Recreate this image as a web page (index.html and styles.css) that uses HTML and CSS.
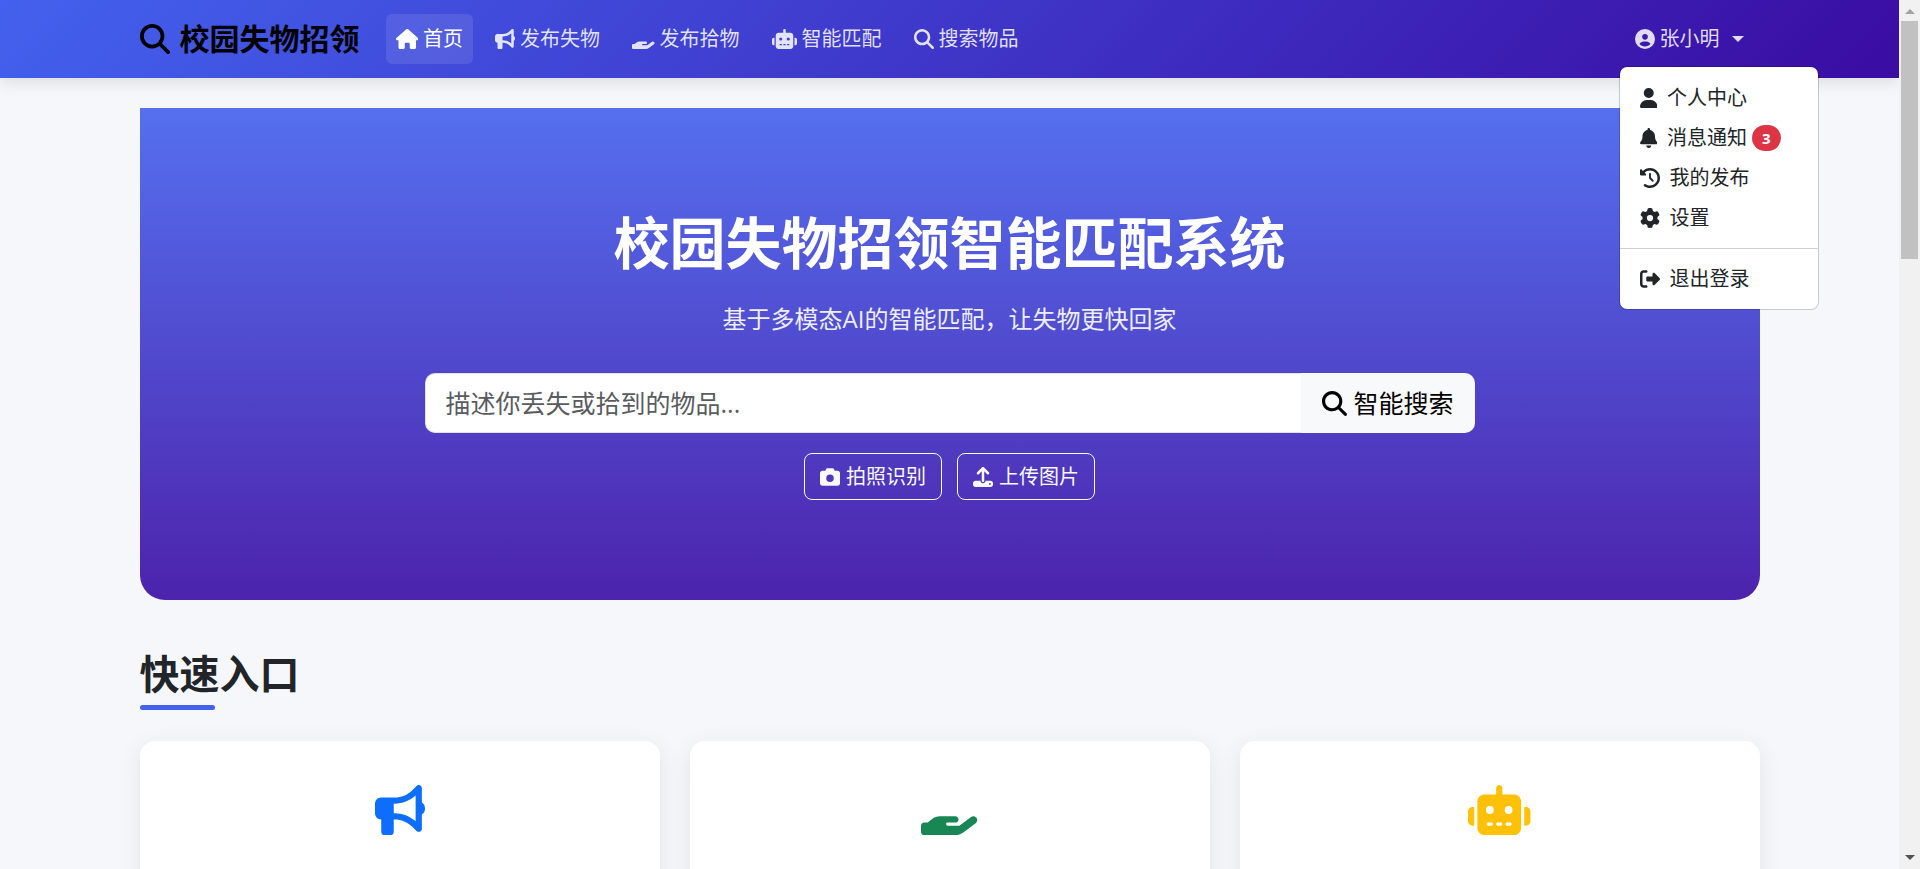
FILE: index.html
```html
<!DOCTYPE html>
<html lang="zh-CN">

<head>
    <meta charset="UTF-8">
    <meta name="viewport" content="width=device-width, initial-scale=1.0">
    <title>校园失物招领智能匹配系统</title>
    <link rel="stylesheet" href="styles.css">
</head>

<body>

    <!-- 共用图标 -->
    <svg class="icon-defs" aria-hidden="true">
        <defs>
            <path id="i-search" d="M416 208c0 45.9-14.9 88.3-40 122.7L502.6 457.4c12.5 12.5 12.5 32.8 0 45.3s-32.8 12.5-45.3 0L330.7 376c-34.4 25.2-76.8 40-122.7 40C93.1 416 0 322.9 0 208S93.1 0 208 0S416 93.1 416 208zM208 352a144 144 0 1 0 0-288 144 144 0 1 0 0 288z"/>
            <path id="i-bullhorn" d="M480 32c0-12.9-7.8-24.6-19.8-29.6s-25.7-2.2-34.9 6.9L381.7 53c-48 48-113.1 75-181 75H192 160 64c-35.3 0-64 28.7-64 64v96c0 35.3 28.7 64 64 64l0 128c0 17.7 14.3 32 32 32h64c17.7 0 32-14.3 32-32V352l8.7 0c67.9 0 133 27 181 75l43.6 43.6c9.2 9.2 22.9 11.9 34.9 6.9s19.8-16.6 19.8-29.6V300.4c18.6-8.8 32-32.5 32-60.4s-13.4-51.6-32-60.4V32zm-64 76.7V240 371.3C357.2 317.8 280.5 288 200.7 288H192V192h8.7c79.8 0 156.5-29.8 215.3-83.3z"/>
            <path id="i-hand" d="M559.7 392.2c17.8-13.1 21.6-38.1 8.5-55.9s-38.1-21.6-55.9-8.5L392.6 416H272c-8.8 0-16-7.2-16-16s7.2-16 16-16h16 64c17.7 0 32-14.3 32-32s-14.3-32-32-32H288 272 193.7c-29.1 0-57.3 9.9-80 28L68.8 384H32c-17.7 0-32 14.3-32 32v64c0 17.7 14.3 32 32 32H192 352.5c29 0 57.3-9.3 80.7-26.5l126.6-93.3z"/>
            <path id="i-robot" d="M320 0c17.7 0 32 14.3 32 32V96H472c39.8 0 72 32.2 72 72V440c0 39.8-32.2 72-72 72H168c-39.8 0-72-32.2-72-72V168c0-39.8 32.2-72 72-72H288V32c0-17.7 14.3-32 32-32zM208 384c-8.8 0-16 7.2-16 16s7.2 16 16 16h32c8.8 0 16-7.2 16-16s-7.2-16-16-16H208zm96 0c-8.8 0-16 7.2-16 16s7.2 16 16 16h32c8.8 0 16-7.2 16-16s-7.2-16-16-16H304zm96 0c-8.8 0-16 7.2-16 16s7.2 16 16 16h32c8.8 0 16-7.2 16-16s-7.2-16-16-16H400zM264 256a40 40 0 1 0-80 0 40 40 0 1 0 80 0zm152 40a40 40 0 1 0 0-80 40 40 0 1 0 0 80zM48 224H64V416H48c-26.5 0-48-21.5-48-48V272c0-26.5 21.5-48 48-48zm544 0c26.5 0 48 21.5 48 48v96c0 26.5-21.5 48-48 48H576V224h16z"/>
        </defs>
    </svg>

    <div class="page">

        <!-- 导航栏 -->
        <nav class="navbar">
            <div class="container navbar-inner">
                <a class="brand" href="#">
                    <svg class="icon" viewBox="0 0 512 512"><use href="#i-search"/></svg>
                    校园失物招领
                </a>
                <ul class="nav">
                    <li>
                        <a class="nav-link active" href="#">
                            <svg class="icon" viewBox="0 0 576 512"><path d="M575.8 255.5c0 18-15 32.1-32 32.1h-32l.7 160.2c0 2.7-.2 5.4-.5 8.1V472c0 22.1-17.9 40-40 40H456c-1.1 0-2.2 0-3.3-.1c-1.4 .1-2.8 .1-4.2 .1H416 392c-22.1 0-40-17.9-40-40V448 384c0-17.7-14.3-32-32-32H256c-17.7 0-32 14.3-32 32v64 24c0 22.1-17.9 40-40 40H160 128.1c-1.5 0-3-.1-4.5-.2c-1.2 .1-2.4 .2-3.6 .2H104c-22.1 0-40-17.9-40-40V360c0-.9 0-1.9 .1-2.8V287.6H32c-18 0-32-14-32-32.1c0-9 3-17 10-24L266.4 8c7-7 15-8 22-8s15 2 21 7L564.8 231.5c8 7 12 15 11 24z"/></svg>
                            首页
                        </a>
                    </li>
                    <li>
                        <a class="nav-link" href="#">
                            <svg class="icon" viewBox="0 0 512 512"><use href="#i-bullhorn"/></svg>
                            发布失物
                        </a>
                    </li>
                    <li>
                        <a class="nav-link" href="#">
                            <svg class="icon" viewBox="0 0 576 512"><use href="#i-hand"/></svg>
                            发布拾物
                        </a>
                    </li>
                    <li>
                        <a class="nav-link" href="#">
                            <svg class="icon" viewBox="0 0 640 512"><use href="#i-robot"/></svg>
                            智能匹配
                        </a>
                    </li>
                    <li>
                        <a class="nav-link" href="#">
                            <svg class="icon" viewBox="0 0 512 512"><use href="#i-search"/></svg>
                            搜索物品
                        </a>
                    </li>
                </ul>
                <div class="user">
                    <button type="button" class="nav-link user-toggle" aria-expanded="true">
                        <svg class="icon" viewBox="0 0 512 512"><path d="M399 384.2C376.9 345.8 335.4 320 288 320H224c-47.4 0-88.9 25.8-111 64.2c35.2 39.2 86.2 63.8 143 63.8s107.8-24.7 143-63.8zM0 256a256 256 0 1 1 512 0A256 256 0 1 1 0 256zm256 16a72 72 0 1 0 0-144 72 72 0 1 0 0 144z"/></svg>
                        张小明
                        <span class="caret"></span>
                    </button>
                    <ul class="dropdown-menu">
                        <li>
                            <a class="dropdown-item" href="#">
                                <svg class="icon" viewBox="0 0 448 512"><path d="M224 256A128 128 0 1 0 224 0a128 128 0 1 0 0 256zm-45.7 48C79.8 304 0 383.8 0 482.3C0 498.7 13.3 512 29.7 512H418.3c16.4 0 29.7-13.3 29.7-29.7C448 383.8 368.2 304 269.7 304H178.3z"/></svg>
                                个人中心
                            </a>
                        </li>
                        <li>
                            <a class="dropdown-item" href="#">
                                <svg class="icon" viewBox="0 0 448 512"><path d="M224 0c-17.7 0-32 14.3-32 32V51.2C119 66 64 130.6 64 208v18.8c0 47-17.3 92.4-48.5 127.6l-7.4 8.3c-8.4 9.4-10.4 22.9-5.3 34.4S19.4 416 32 416H416c12.6 0 24-7.4 29.2-18.9s3.1-25-5.3-34.4l-7.4-8.3C401.3 319.2 384 273.9 384 226.8V208c0-77.4-55-142-128-156.8V32c0-17.7-14.3-32-32-32zm45.3 493.3c12-12 18.7-28.3 18.7-45.3H224 160c0 17 6.7 33.3 18.7 45.3s28.3 18.7 45.3 18.7s33.3-6.7 45.3-18.7z"/></svg>
                                <span>消息通知</span>
                                <span class="badge">3</span>
                            </a>
                        </li>
                        <li>
                            <a class="dropdown-item" href="#">
                                <svg class="icon" viewBox="0 0 512 512"><path d="M75 75L41 41C25.9 25.9 0 36.6 0 57.9V168c0 13.3 10.7 24 24 24H134.1c21.4 0 32.1-25.9 17-41l-30.8-30.8C155 85.5 203 64 256 64c106 0 192 86 192 192s-86 192-192 192c-40.8 0-78.6-12.7-109.7-34.4c-14.5-10.1-34.4-6.6-44.6 7.9s-6.6 34.4 7.9 44.6C151.2 495 201.7 512 256 512c141.4 0 256-114.6 256-256S397.4 0 256 0C185.3 0 121.3 28.7 75 75zm181 53c-13.3 0-24 10.7-24 24V256c0 6.4 2.5 12.5 7 17l72 72c9.4 9.4 24.6 9.4 33.9 0s9.4-24.6 0-33.9l-65-65V152c0-13.3-10.7-24-24-24z"/></svg>
                                我的发布
                            </a>
                        </li>
                        <li>
                            <a class="dropdown-item" href="#">
                                <svg class="icon" viewBox="0 0 512 512"><path d="M495.9 166.6c3.2 8.7 .5 18.4-6.4 24.6l-43.3 39.4c1.1 8.3 1.7 16.8 1.7 25.4s-.6 17.1-1.7 25.4l43.3 39.4c6.9 6.2 9.6 15.9 6.4 24.6c-4.4 11.9-9.7 23.3-15.8 34.3l-4.7 8.1c-6.6 11-14 21.4-22.1 31.2c-5.9 7.2-15.7 9.6-24.5 6.8l-55.7-17.7c-13.4 10.3-28.2 18.9-44 25.4l-12.5 57.1c-2 9.1-9 16.3-18.2 17.8c-13.8 2.3-28 3.5-42.5 3.5s-28.7-1.2-42.5-3.5c-9.2-1.5-16.2-8.7-18.2-17.8l-12.5-57.1c-15.8-6.5-30.6-15.1-44-25.4L83.1 425.9c-8.8 2.8-18.6 .3-24.5-6.8c-8.1-9.8-15.5-20.2-22.1-31.2l-4.7-8.1c-6.1-11-11.4-22.4-15.8-34.3c-3.2-8.7-.5-18.4 6.4-24.6l43.3-39.4C64.6 273.1 64 264.6 64 256s.6-17.1 1.7-25.4L22.4 191.2c-6.9-6.2-9.6-15.9-6.4-24.6c4.4-11.9 9.7-23.3 15.8-34.3l4.7-8.1c6.6-11 14-21.4 22.1-31.2c5.9-7.2 15.7-9.6 24.5-6.8l55.7 17.7c13.4-10.3 28.2-18.9 44-25.4l12.5-57.1c2-9.1 9-16.3 18.2-17.8C227.3 1.2 241.5 0 256 0s28.7 1.2 42.5 3.5c9.2 1.5 16.2 8.7 18.2 17.8l12.5 57.1c15.8 6.5 30.6 15.1 44 25.4l55.7-17.7c8.8-2.8 18.6-.3 24.5 6.8c8.1 9.8 15.5 20.2 22.1 31.2l4.7 8.1c6.1 11 11.4 22.4 15.8 34.3zM256 336a80 80 0 1 0 0-160 80 80 0 1 0 0 160z"/></svg>
                                设置
                            </a>
                        </li>
                        <li class="dropdown-divider"></li>
                        <li>
                            <a class="dropdown-item" href="#">
                                <svg class="icon" viewBox="0 0 512 512"><path d="M377.9 105.9L500.7 228.7c7.2 7.2 11.3 17.1 11.3 27.3s-4.1 20.1-11.3 27.3L377.9 406.1c-6.4 6.4-15 9.9-24 9.9c-18.7 0-33.9-15.2-33.9-33.9l0-62.1-128 0c-17.7 0-32-14.3-32-32l0-64c0-17.7 14.3-32 32-32l128 0 0-62.1c0-18.7 15.2-33.9 33.9-33.9c9 0 17.6 3.6 24 9.9zM160 96L96 96c-17.7 0-32 14.3-32 32l0 256c0 17.7 14.3 32 32 32l64 0c17.7 0 32 14.3 32 32s-14.3 32-32 32l-64 0c-53 0-96-43-96-96L0 128C0 75 43 32 96 32l64 0c17.7 0 32 14.3 32 32s-14.3 32-32 32z"/></svg>
                                退出登录
                            </a>
                        </li>
                    </ul>
                </div>
            </div>
        </nav>

        <main class="container">

            <!-- 搜索区 -->
            <section class="hero">
                <h1>校园失物招领智能匹配系统</h1>
                <p class="lead">基于多模态AI的智能匹配，让失物更快回家</p>
                <form class="search" action="javascript:void(0);">
                    <input type="text" class="search-input" aria-label="描述你丢失或拾到的物品" placeholder="描述你丢失或拾到的物品...">
                    <button type="submit" class="search-btn">
                        <svg class="icon" viewBox="0 0 512 512"><use href="#i-search"/></svg>
                        智能搜索
                    </button>
                </form>
                <div class="hero-actions">
                    <button type="button" class="btn-outline">
                        <svg class="icon" viewBox="0 0 512 512"><path d="M149.1 64.8L138.7 96H64C28.7 96 0 124.7 0 160V416c0 35.3 28.7 64 64 64H448c35.3 0 64-28.7 64-64V160c0-35.3-28.7-64-64-64H373.3L362.9 64.8C356.4 45.2 338.1 32 317.4 32H194.6c-20.7 0-39 13.2-45.5 32.8zM256 192a96 96 0 1 1 0 192 96 96 0 1 1 0-192z"/></svg>
                        拍照识别
                    </button>
                    <button type="button" class="btn-outline">
                        <svg class="icon" viewBox="0 0 512 512"><path d="M288 109.3V352c0 17.7-14.3 32-32 32s-32-14.3-32-32V109.3l-73.4 73.4c-12.5 12.5-32.8 12.5-45.3 0s-12.5-32.8 0-45.3l128-128c12.5-12.5 32.8-12.5 45.3 0l128 128c12.5 12.5 12.5 32.8 0 45.3s-32.8 12.5-45.3 0L288 109.3zM64 352H192c0 35.3 28.7 64 64 64s64-28.7 64-64H448c35.3 0 64 28.7 64 64v32c0 35.3-28.7 64-64 64H64c-35.3 0-64-28.7-64-64V416c0-35.3 28.7-64 64-64zM432 456a24 24 0 1 0 0-48 24 24 0 1 0 0 48z"/></svg>
                        上传图片
                    </button>
                </div>
            </section>

            <!-- 快速入口 -->
            <section class="quick">
                <h2 class="section-title">快速入口</h2>
                <div class="cards">
                    <a class="card card-blue" href="#" aria-label="发布失物">
                        <svg class="icon" viewBox="0 0 512 512"><use href="#i-bullhorn"/></svg>
                    </a>
                    <a class="card card-green" href="#" aria-label="发布拾物">
                        <svg class="icon" viewBox="0 0 576 512"><use href="#i-hand"/></svg>
                    </a>
                    <a class="card card-yellow" href="#" aria-label="智能匹配">
                        <svg class="icon" viewBox="0 0 640 512"><use href="#i-robot"/></svg>
                    </a>
                </div>
            </section>

        </main>
    </div>

    <!-- 滚动条 -->
    <div class="scrollbar" aria-hidden="true">
        <span class="arrow arrow-up"></span>
        <span class="thumb"></span>
        <span class="arrow arrow-down"></span>
    </div>

</body>

</html>
```
FILE: styles.css
```css
* {
    box-sizing: border-box;
}

body {
    font-family: "Open Sans", "Noto Sans CJK SC", sans-serif;
    font-size: 20px;
    line-height: 30px;
    color: #212529;
    background-color: #f5f7fb;
    display: flex;
    height: 100vh;
    margin: 0;
    overflow: hidden;
}

ul {
    list-style: none;
    margin: 0;
    padding: 0;
}

a {
    color: inherit;
    text-decoration: none;
}

button,
input {
    font-family: inherit;
    font-size: inherit;
    line-height: inherit;
    margin: 0;
}

button {
    cursor: pointer;
}

.icon-defs {
    display: none;
}

.icon {
    height: 1em;
    width: auto;
    fill: currentColor;
    flex-shrink: 0;
}

.page {
    flex: 1;
    min-width: 0;
    height: 100%;
    overflow: hidden;
}

.container {
    max-width: 1620px;
    margin: 0 auto;
}

/* 导航栏 */
.navbar {
    position: relative;
    z-index: 10;
    padding: 14px 0;
    background: linear-gradient(135deg, #4361ee, #3a0ca3);
    box-shadow: 0 5px 15px rgba(0, 0, 0, 0.1);
}

.navbar-inner {
    display: flex;
    align-items: center;
}

.brand {
    display: flex;
    align-items: center;
    gap: 10px;
    margin-right: 20px;
    font-size: 30px;
    font-weight: 700;
    color: #000;
}

.nav {
    display: flex;
    flex: 1;
}

.nav-link {
    display: flex;
    align-items: center;
    gap: 5px;
    margin: 0 6px;
    padding: 10px;
    border: none;
    border-radius: 6px;
    background: none;
    color: rgba(255, 255, 255, 0.85);
    white-space: nowrap;
}

.nav-link.active {
    color: #fff;
    background-color: rgba(255, 255, 255, 0.1);
}

.user {
    position: relative;
}

.caret {
    margin-left: 7px;
    border-top: 6px solid;
    border-left: 6px solid transparent;
    border-right: 6px solid transparent;
}

.dropdown-menu {
    position: absolute;
    top: 100%;
    left: 0;
    width: 200px;
    margin-top: 2px;
    padding: 11px 0 10px;
    border: 1px solid rgba(0, 0, 0, 0.18);
    border-radius: 8px;
    background-color: #fff;
    background-clip: padding-box;
}

.dropdown-item {
    display: flex;
    align-items: center;
    gap: 10px;
    padding: 5px 20px;
}

.dropdown-divider {
    height: 1px;
    margin: 10px 0;
    background-color: #d0d0d1;
}

.badge {
    margin-left: -5px;
    padding: 5px 10px;
    border-radius: 13px;
    background-color: #dc3545;
    color: #fff;
    font-size: 15px;
    font-weight: 700;
    line-height: 16px;
}

/* 搜索区 */
.hero {
    margin-top: 30px;
    padding: 100px 30px;
    border-radius: 0 0 25px 25px;
    background: linear-gradient(180deg, rgba(67, 97, 238, 0.9), rgba(58, 12, 163, 0.9));
    color: #fff;
    text-align: center;
}

.hero h1 {
    margin: 0 0 25px;
    font-size: 56px;
    font-weight: 700;
    line-height: 68px;
}

.lead {
    margin: 0 0 36px;
    font-size: 24px;
    line-height: 36px;
    opacity: 0.9;
}

.search {
    display: flex;
    max-width: 1050px;
    height: 60px;
    margin: 0 auto 20px;
    font-size: 25px;
}

.search-input {
    flex: 1;
    min-width: 0;
    padding: 10px 20px;
    border: 1px solid #dee2e6;
    border-right: none;
    border-radius: 10px 0 0 10px;
    background-color: #fff;
    color: #212529;
}

.search-input::placeholder {
    color: #595c5f;
    opacity: 1;
}

.search-btn {
    display: flex;
    align-items: center;
    gap: 6px;
    padding: 10px 21px;
    border: none;
    border-radius: 0 10px 10px 0;
    background-color: #f8f9fa;
    color: #000;
}

.hero-actions {
    display: flex;
    justify-content: center;
    gap: 15px;
}

.btn-outline {
    display: flex;
    align-items: center;
    gap: 6px;
    padding: 8px 15px;
    border: 1px solid #f8f9fa;
    border-radius: 8px;
    background: none;
    color: #f8f9fa;
    line-height: 29px;
}

/* 快速入口 */
.quick {
    margin-top: 50px;
}

.section-title {
    margin: 0 0 31px;
    font-size: 40px;
    font-weight: 700;
    line-height: 48px;
}

.section-title::after {
    content: "";
    display: block;
    width: 75px;
    height: 5px;
    margin-top: 7px;
    border-radius: 3px;
    background-color: #4361ee;
}

.cards {
    display: grid;
    grid-template-columns: repeat(3, 1fr);
    gap: 30px;
}

.card {
    display: flex;
    justify-content: center;
    padding: 44px 30px 100px;
    border-radius: 15px;
    background-color: #fff;
    box-shadow: 0 5px 25px rgba(0, 0, 0, 0.08);
    font-size: 50px;
}

.card-blue {
    color: #0d6efd;
}

.card-green {
    color: #198754;
}

.card-yellow {
    color: #ffc107;
}

/* 滚动条 */
.scrollbar {
    display: flex;
    flex-direction: column;
    align-items: center;
    width: 21px;
    padding: 9px 0;
    background-color: #f1f1f1;
}

.arrow {
    border-left: 5px solid transparent;
    border-right: 5px solid transparent;
}

.arrow-up {
    border-bottom: 5px solid #a3a3a3;
}

.arrow-down {
    margin-top: auto;
    border-top: 5px solid #505050;
}

.thumb {
    width: 17px;
    height: 28%;
    margin-top: 7px;
    background-color: #c1c1c1;
}
```
